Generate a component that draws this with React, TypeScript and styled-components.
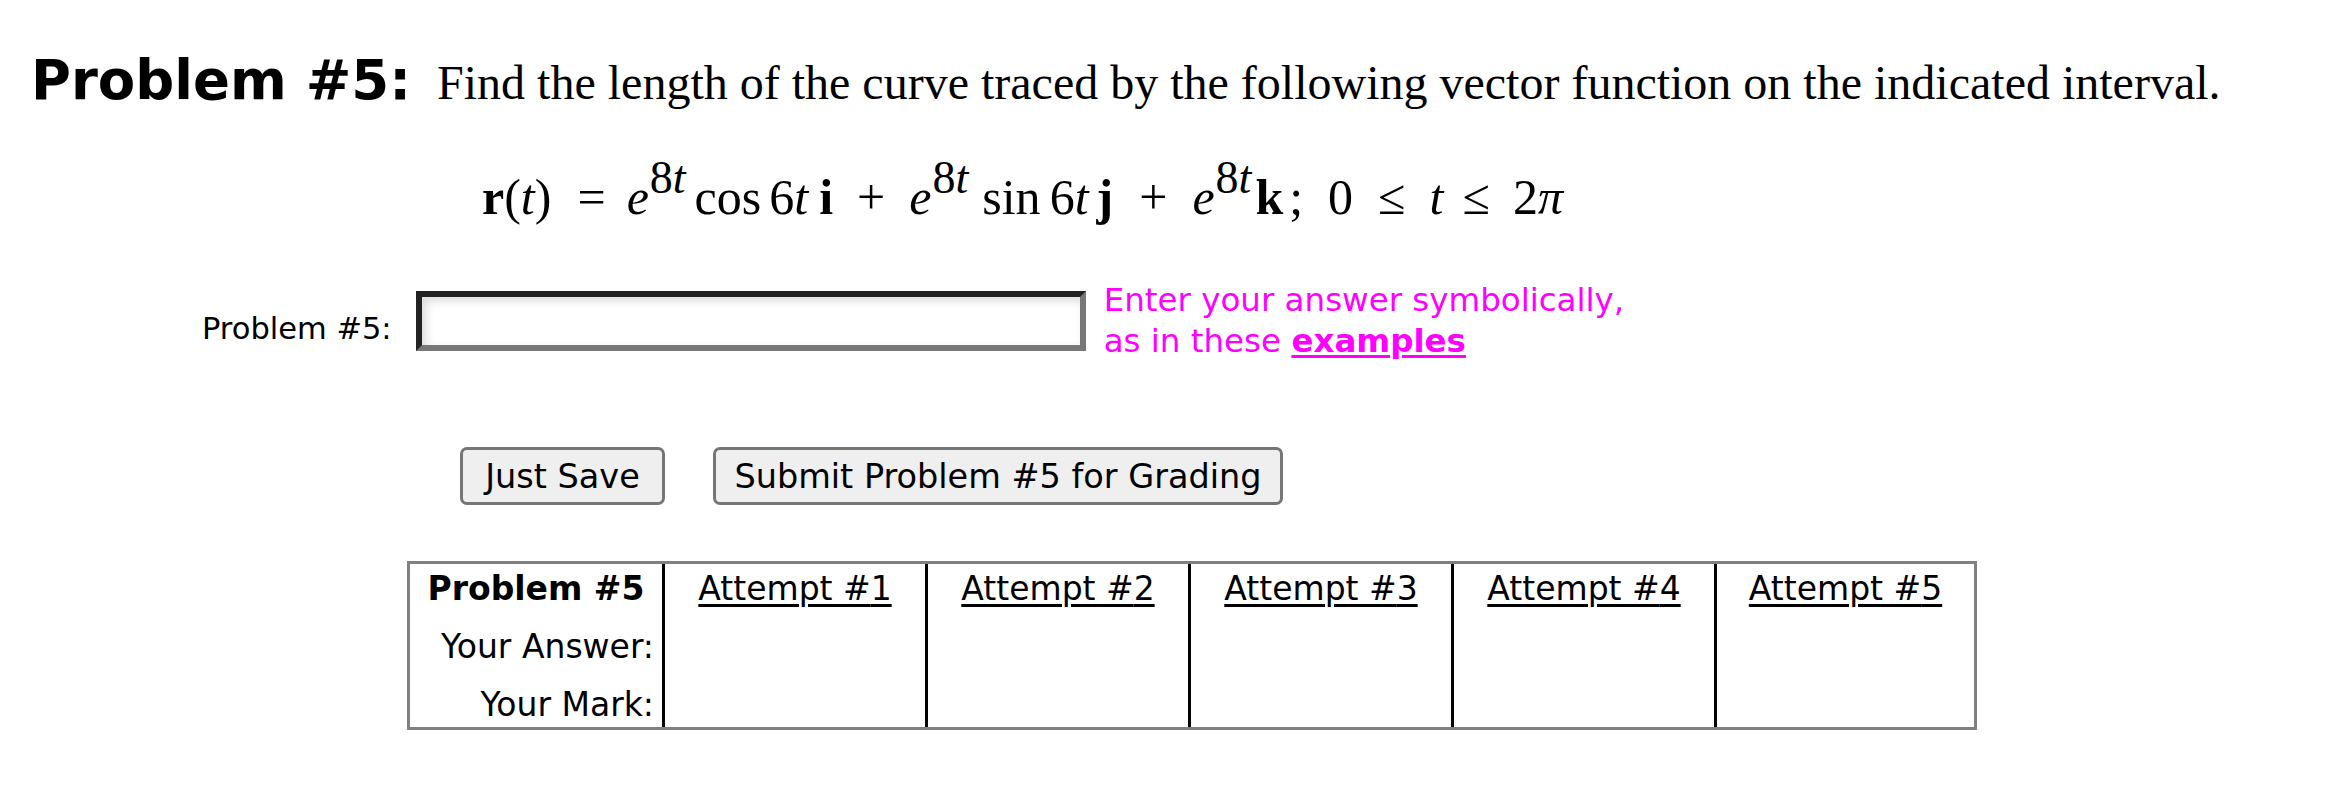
import React from "react";
import styled, { createGlobalStyle } from "styled-components";

const Global = createGlobalStyle`
  html, body { margin: 0; padding: 0; background: #fff; }
  body { font-family: "DejaVu Sans", Verdana, sans-serif; color: #000; }
`;

const Page = styled.div`
  width: 2340px;
  height: 787px;
  overflow: hidden;
  display: flex;
  flex-direction: column;
`;

const Heading = styled.div`
  display: flex;
  align-items: baseline;
  padding: 48px 0 0 31px;
  line-height: 64px;
  white-space: nowrap;
`;

const ProblemTag = styled.span`
  font-family: "DejaVu Sans", Verdana, sans-serif;
  font-weight: 700;
  font-size: 54.5px;
`;

const Statement = styled.span`
  font-family: "Liberation Serif", "Times New Roman", serif;
  font-size: 48px;
  margin-left: 26px;
`;

const Formula = styled.div`
  display: flex;
  align-items: baseline;
  font-family: "Liberation Serif", "Times New Roman", serif;
  font-size: 50px;
  line-height: 60px;
  height: 60px;
  margin-top: 52px;
  padding-left: 482px;
  white-space: pre;
`;

const V = styled.span<{ $b?: boolean; $i?: boolean }>`
  font-family: "Liberation Serif", "Times New Roman", serif;
  font-weight: ${(p) => (p.$b ? 700 : 400)};
  font-style: ${(p) => (p.$i ? "italic" : "normal")};
`;

const Sup = styled.span`
  font-family: "Liberation Serif", "Times New Roman", serif;
  font-size: 0.92em;
  position: relative;
  top: -21px;
`;

const Gap = styled.span<{ $w: number }>`
  display: inline-block;
  width: ${(p) => p.$w}px;
`;

const AnswerRow = styled.div`
  display: flex;
  align-items: flex-start;
  margin-top: 53px;
  padding-left: 202px;
  height: 86px;
`;

const Label = styled.label`
  font-size: 30.5px;
  line-height: 36px;
  margin-top: 31px;
  white-space: nowrap;
`;

const AnswerInput = styled.input`
  box-sizing: border-box;
  width: 670px;
  height: 60px;
  margin: 11px 0 0 24px;
  border: 6px solid;
  border-color: #222 #777 #777 #222;
  box-shadow: inset 4px 4px 10px rgba(0, 0, 0, 0.14);
  background: #fff;
  padding: 0 6px;
  font-family: "DejaVu Sans", Verdana, sans-serif;
  font-size: 30px;
  outline: none;
`;

const Hint = styled.div`
  margin-left: 18px;
  font-size: 32.5px;
  line-height: 41px;
  color: #f0f;
  white-space: nowrap;
`;

const HintLink = styled.a`
  font-weight: 700;
  color: #f0f;
  text-decoration: underline;
  text-decoration-thickness: 3px;
  text-underline-offset: 3px;
`;

const ButtonRow = styled.div`
  display: flex;
  gap: 48px;
  margin-top: 81px;
  padding-left: 460px;
`;

const Btn = styled.button<{ $w: number }>`
  box-sizing: border-box;
  width: ${(p) => p.$w}px;
  height: 58px;
  border: 3px solid #767676;
  border-radius: 7px;
  background: #efefef;
  font-family: "DejaVu Sans", Verdana, sans-serif;
  font-size: 33.5px;
  color: #000;
  padding: 0;
  white-space: nowrap;
`;

const Attempts = styled.div`
  margin: 56px 0 0 407px;
  display: grid;
  grid-template-columns: 252px repeat(4, 263px) 260px;
  border: 3px solid #808080;
  width: fit-content;
`;

const Column = styled.div<{ $divider?: boolean }>`
  box-sizing: border-box;
  display: grid;
  grid-template-rows: 58px 58px 47px;
  border-left: ${(p) => (p.$divider ? "3px solid #000" : "none")};
`;

const Cell = styled.div<{ $align: "left" | "center" | "right"; $bold?: boolean }>`
  box-sizing: border-box;
  padding: 6px 8px 0 8px;
  font-size: 33px;
  line-height: 37px;
  text-align: ${(p) => p.$align};
  font-weight: ${(p) => (p.$bold ? 700 : 400)};
  white-space: nowrap;
`;

const AttemptLink = styled.a`
  color: #000;
  text-decoration: underline;
  text-decoration-thickness: 3px;
  text-underline-offset: 4px;
`;

function ExpTerm() {
  return (
    <>
      <V $i>e</V>
      <Gap $w={1} />
      <Sup>
        8<V $i>t</V>
      </Sup>
    </>
  );
}

export default function App() {
  const attempts = [1, 2, 3, 4, 5];
  return (
    <Page>
      <Global />
      <Heading>
        <ProblemTag>Problem #5:</ProblemTag>
        <Statement>
          Find the length of the curve traced by the following vector function on the indicated interval.
        </Statement>
      </Heading>
      <Formula>
        <V $b>r</V>(<V $i>t</V>)
        <Gap $w={26} />=
        <Gap $w={21} />
        <ExpTerm />
        <Gap $w={9} />cos
        <Gap $w={8} />6<V $i>t</V>
        <Gap $w={11} />
        <V $b>i</V>
        <Gap $w={24} />+
        <Gap $w={24} />
        <ExpTerm />
        <Gap $w={14} />sin
        <Gap $w={9} />6<V $i>t</V>
        <Gap $w={8} />
        <V $b>j</V>
        <Gap $w={26} />+
        <Gap $w={25} />
        <ExpTerm />
        <Gap $w={4} />
        <V $b>k</V>
        <Gap $w={6} />;
        <Gap $w={25} />0
        <Gap $w={25} />
        {"\u2264"}
        <Gap $w={24} />
        <V $i>t</V>
        <Gap $w={19} />
        {"\u2264"}
        <Gap $w={23} />2<V $i>π</V>
      </Formula>
      <AnswerRow>
        <Label htmlFor="answer5">Problem #5:</Label>
        <AnswerInput id="answer5" type="text" />
        <Hint>
          Enter your answer symbolically,
          <br />
          as in these <HintLink href="#">examples</HintLink>
        </Hint>
      </AnswerRow>
      <ButtonRow>
        <Btn $w={205}>Just Save</Btn>
        <Btn $w={570}>Submit Problem #5 for Grading</Btn>
      </ButtonRow>
      <Attempts>
        <Column>
          <Cell $align="center" $bold>
            Problem #5
          </Cell>
          <Cell $align="right">Your Answer:</Cell>
          <Cell $align="right">Your Mark:</Cell>
        </Column>
        {attempts.map((n) => (
          <Column key={n} $divider>
            <Cell $align="center">
              <AttemptLink href="#">Attempt #{n}</AttemptLink>
            </Cell>
            <Cell $align="center" />
            <Cell $align="center" />
          </Column>
        ))}
      </Attempts>
    </Page>
  );
}
